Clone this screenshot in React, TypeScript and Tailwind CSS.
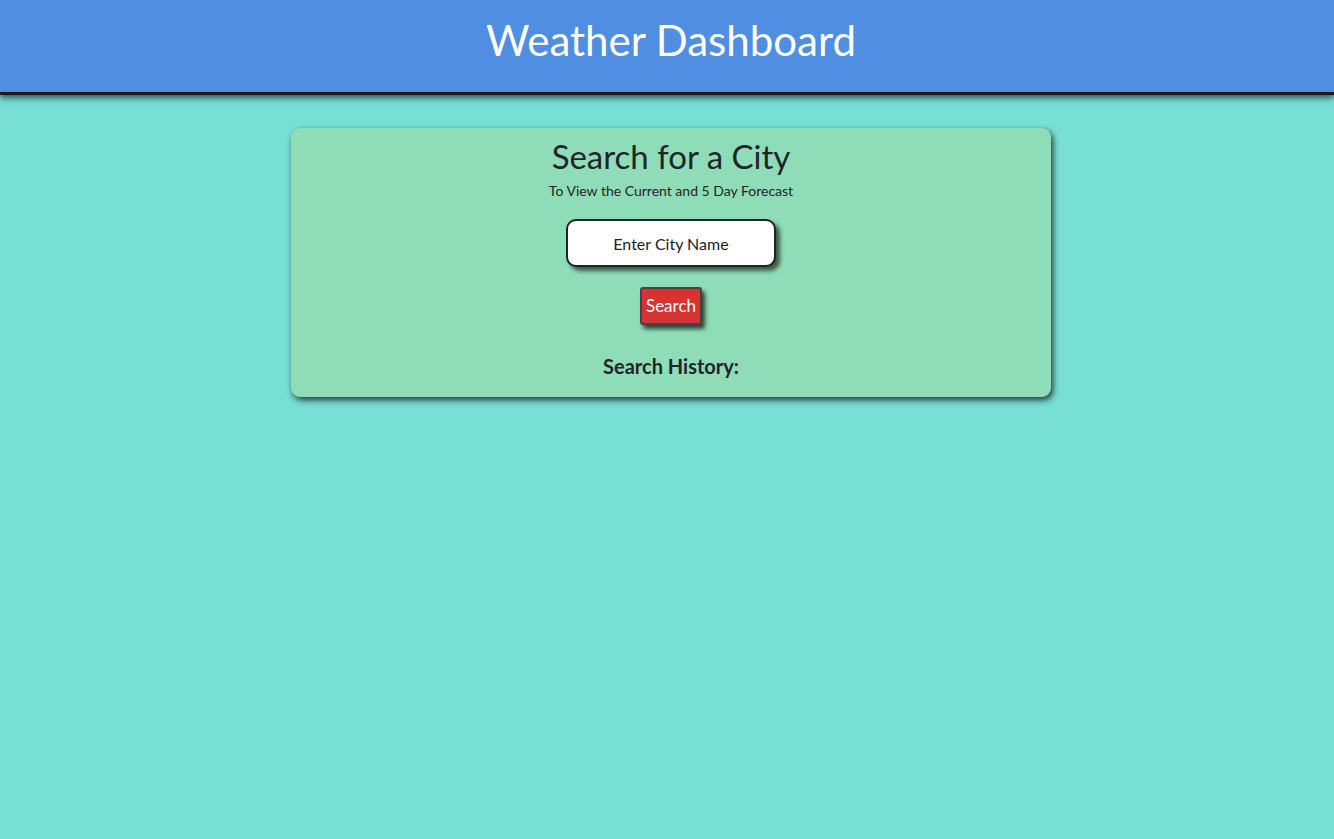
export default function App() {
  return (
    <div className="min-h-[839px] bg-[#77dfd4] pl-[8px] font-['Lato','Open_Sans',sans-serif] text-[#212529]">
      <header className="-ml-[8px] flex h-[95px] items-start justify-center border-b-[3px] border-[#1a1a1a] bg-[#4f8ee0] pl-[8px] pt-[14px] shadow-[0_3px_6px_rgba(0,0,0,0.6)]">
        <h1 className="text-[42px] leading-[52px] text-white">Weather Dashboard</h1>
      </header>
      <main className="flex justify-center pt-[33px]">
        <section className="flex w-[760px] flex-col items-center rounded-[9px] bg-[#8fddb8] pt-[9px] pb-[18px] shadow-[2px_3px_6px_rgba(0,0,0,0.75)]">
          <h2 className="text-[33px] leading-[38px]">Search for a City</h2>
          <p className="mt-[6px] text-[14px] leading-[20px]">To View the Current and 5 Day Forecast</p>
          <input
            type="text"
            placeholder="Enter City Name"
            className="mt-[18px] h-[48px] w-[210px] rounded-[10px] border-2 border-[#222] bg-white text-center text-[16px] shadow-[4px_4px_4px_rgba(0,0,0,0.6)] outline-none placeholder:text-[#222]"
          />
          <button className="mt-[20px] h-[38px] rounded-[3px] border-2 border-[#444] bg-[#d63333] px-[4px] text-[17px] text-white shadow-[3px_4px_4px_rgba(0,0,0,0.7)]">
            Search
          </button>
          <h3 className="mt-[28px] text-[20px] font-bold leading-[26px]">Search History:</h3>
        </section>
      </main>
    </div>
  )
}
